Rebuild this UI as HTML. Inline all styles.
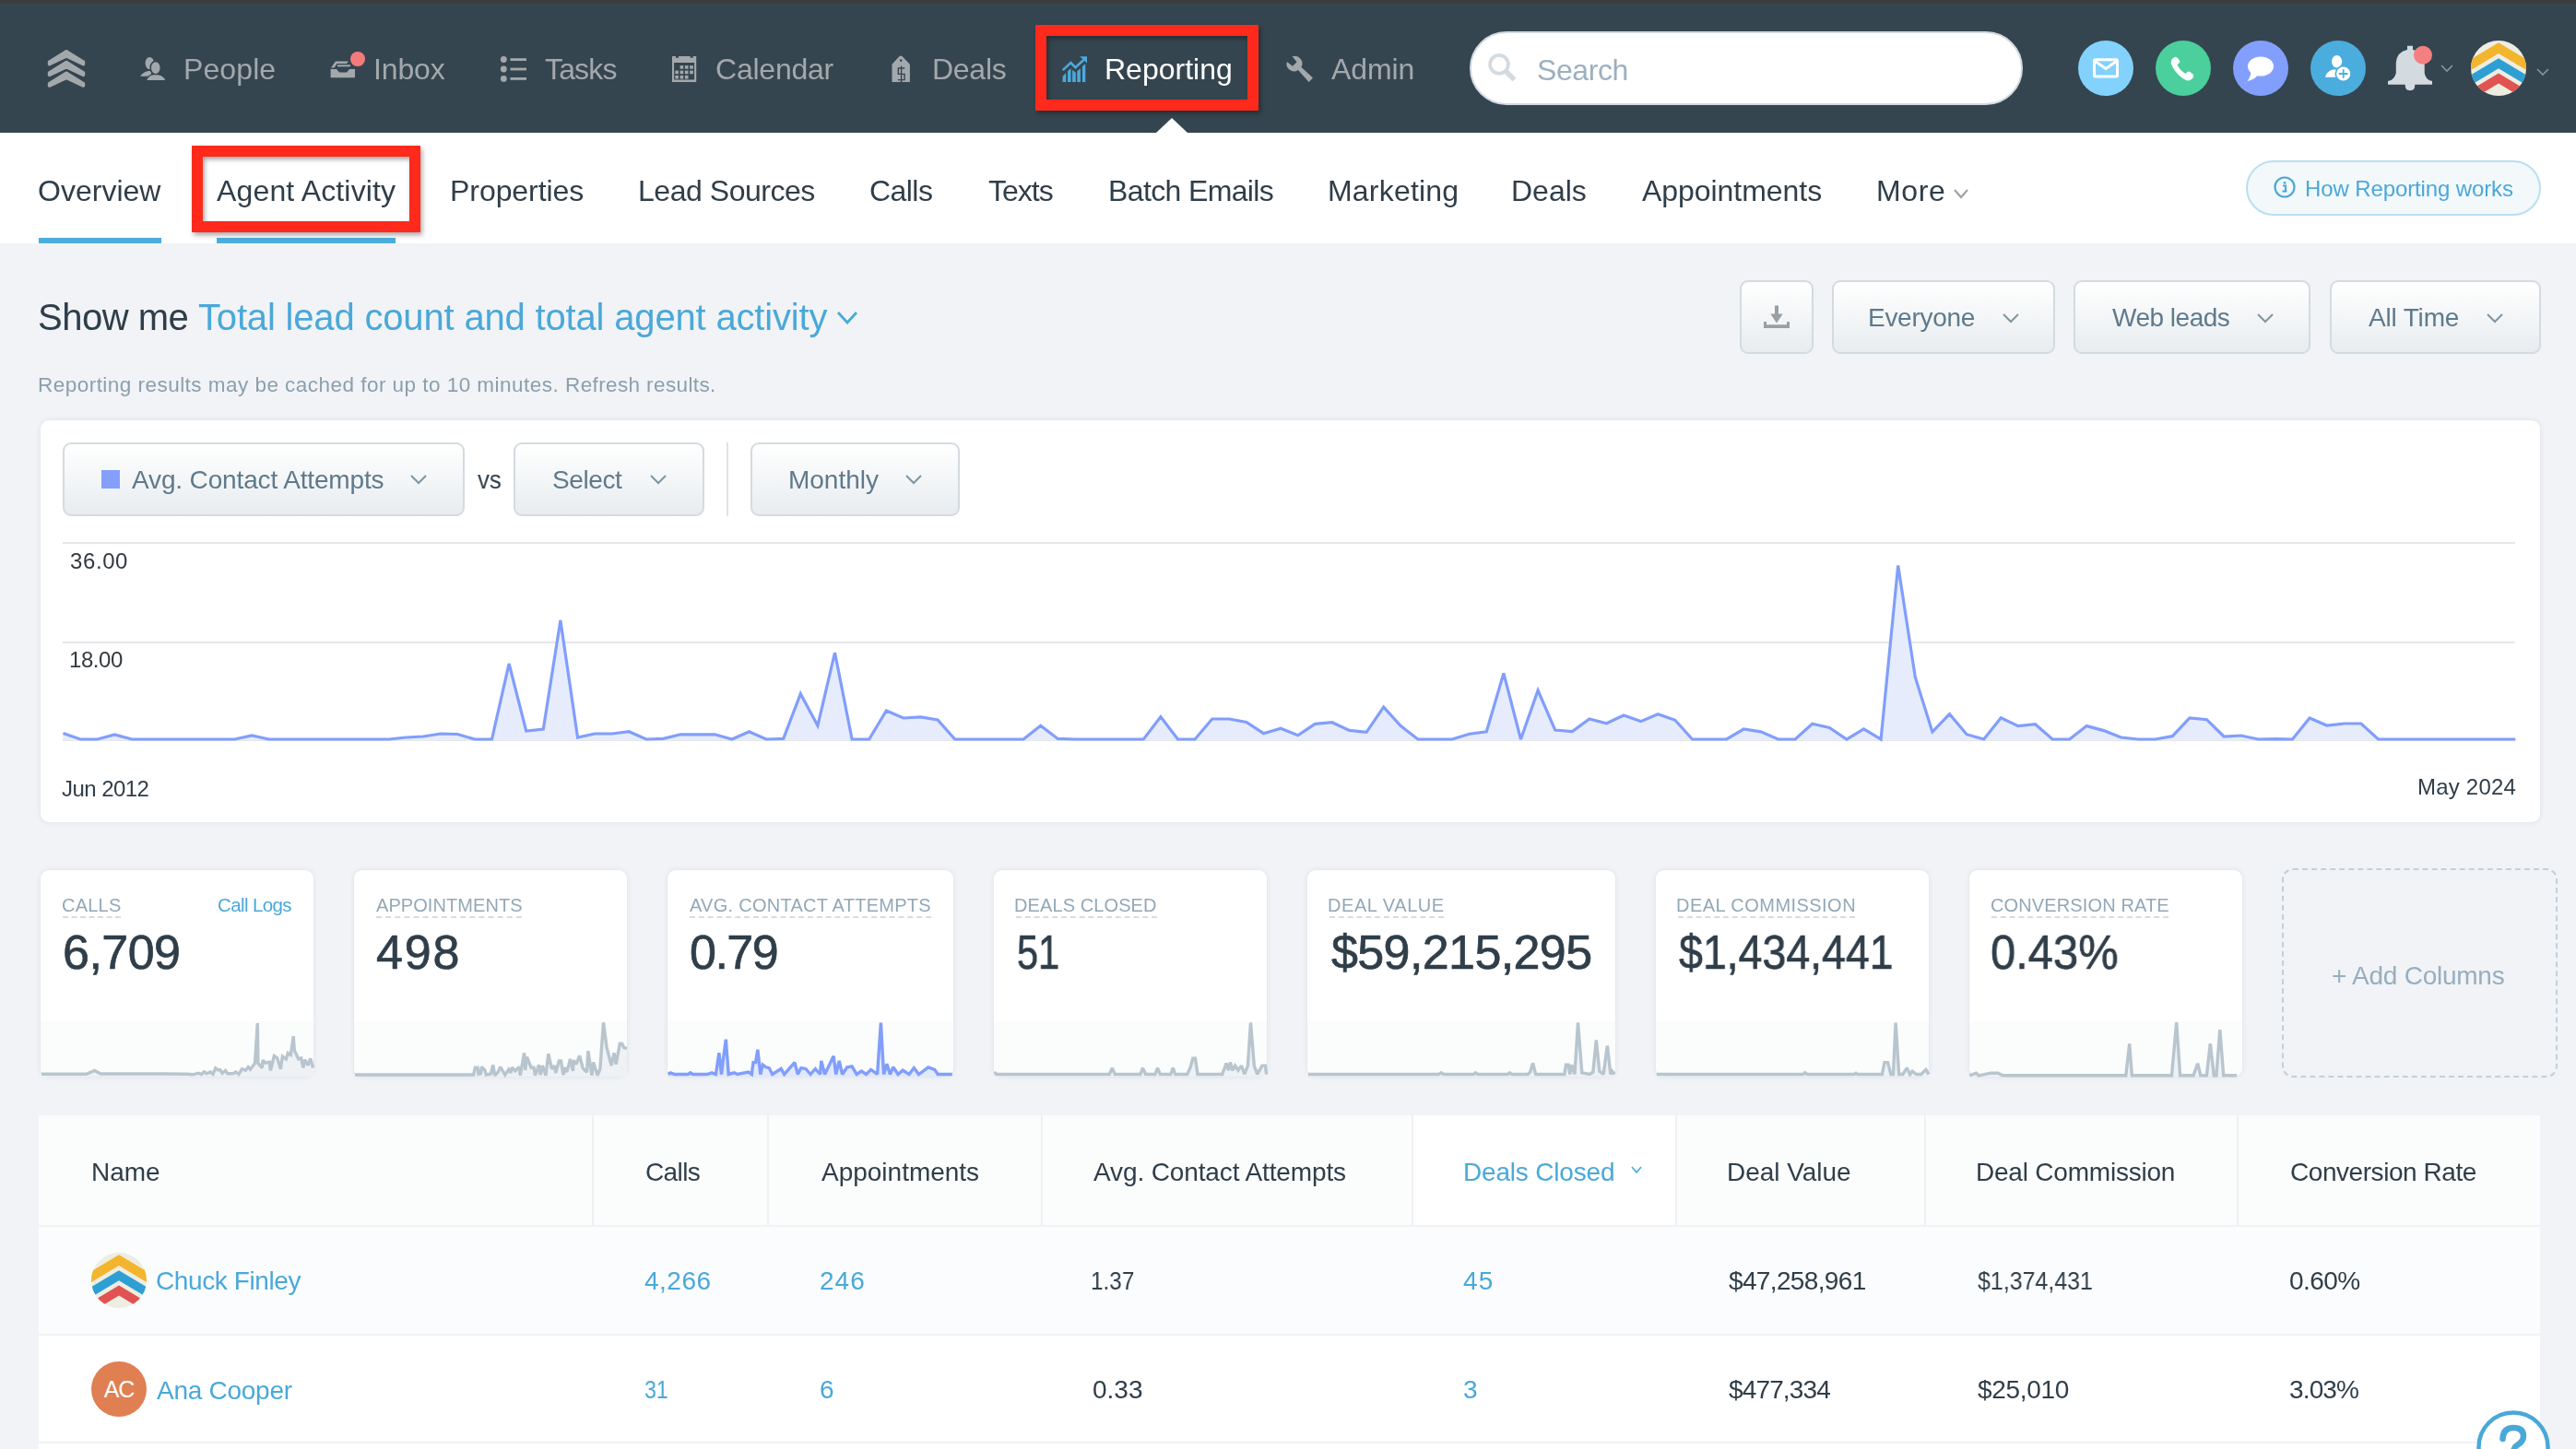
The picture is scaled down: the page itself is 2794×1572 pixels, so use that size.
<!DOCTYPE html><html><head><meta charset="utf-8"><title>Reporting - Agent Activity</title><style>
*{box-sizing:border-box}
html,body{margin:0;padding:0}
body{width:2794px;height:1572px;overflow:hidden;position:relative;background:#f1f3f6;font-family:"Liberation Sans",sans-serif}
.t{position:absolute;white-space:pre;will-change:transform}
.a{position:absolute}
.btn{position:absolute;border:2px solid #d3dbe0;border-radius:9px;background:linear-gradient(#ffffff,#e8ecef)}
.card{position:absolute;background:#fff;border-radius:9px;box-shadow:0 0 0 1px #e6e9ee,0 0 6px rgba(60,80,110,0.09);overflow:hidden}
.spk{position:absolute;left:0;right:0;bottom:0;height:60px;background:#fbfcfc}
.dash{position:absolute;height:0;border-top:2px dashed #d9dcdc}
.redbox{position:absolute;border:12px solid #ff2a1b;box-shadow:2px 3px 5px rgba(0,0,0,0.35),inset 2px 3px 5px rgba(0,0,0,0.35)}
</style></head><body>
<div class="a" style="left:0;top:0;width:2794px;height:4px;background:#3c3c3c"></div>
<div class="a" style="left:0;top:4px;width:2794px;height:140px;background:#35454f"></div>
<div class="a" style="left:0;top:144px;width:2794px;height:120px;background:#fff"></div>
<svg class="a" style="left:48px;top:50px" width="48" height="48"><g fill="#a3a8ac" stroke="#a3a8ac" stroke-width="3.4" stroke-linejoin="round"><polygon points="24,5.8 42.5,17.3 42.5,19.7 24,11 5.5,19.7 5.5,17.3"/><polygon points="24,17.5 42.5,29.0 42.5,31.4 24,22.7 5.5,31.4 5.5,29.0"/><polygon points="24,29.2 42.5,40.7 42.5,43.099999999999994 24,34.4 5.5,43.099999999999994 5.5,40.7"/></g></svg>
<svg class="a" style="left:145px;top:50px" width="40" height="40" viewBox="0 0 40 40"><g fill="#a3a8ac"><ellipse cx="17.3" cy="18.6" rx="4.7" ry="6.7"/><path d="M7 32.8 Q10 28 16 26.9 L19 27 L19 32.8 Z"/><ellipse cx="23.8" cy="23.6" rx="5.6" ry="7.2" stroke="#35454f" stroke-width="1.6"/><path d="M13.5 37.6 Q15 32 21 30.7 L26.5 30.7 Q33.5 32 35 37.6 Z" stroke="#35454f" stroke-width="1.2"/></g></svg>
<svg class="a" style="left:356px;top:54px" width="44" height="34" viewBox="0 0 44 34"><g fill="#a3a8ac"><path d="M2.6 21 L9 21 L12 24.5 L20 24.5 L23 21 L29 21 L29 29.5 Q29 30.3 28.2 30.3 L3.4 30.3 Q2.6 30.3 2.6 29.5 Z"/><path d="M3 19.5 L8 12.5 L22 12.5 L20 15 L9.5 15 L6.5 19.5 Z"/><rect x="10" y="16.3" width="14" height="2"/></g><circle cx="32" cy="10" r="8" fill="#f47b7b"/></svg>
<svg class="a" style="left:540px;top:58px" width="34" height="34" viewBox="0 0 34 34"><g fill="#a3a8ac"><circle cx="6.3" cy="6.5" r="3.4"/><circle cx="6.3" cy="17" r="3.4"/><circle cx="6.3" cy="27.4" r="3.4"/><rect x="13.5" y="5.2" width="17.5" height="2.8"/><rect x="13.5" y="15.6" width="17.5" height="2.8"/><rect x="13.5" y="26" width="17.5" height="2.8"/></g></svg>
<svg class="a" style="left:728px;top:60px" width="30" height="30" viewBox="0 0 30 30"><g fill="#a3a8ac"><path d="M1 1 L5 1 L5 2.7 L8 2.7 L8 1 L20.7 1 L20.7 2.7 L23.7 2.7 L23.7 1 L27.2 1 L27.2 29 L1 29 Z M3.1 8.1 L3.1 26.6 L25.1 26.6 L25.1 8.1 Z"/><rect x="9.6" y="11.1" width="3.6" height="3.6"/><rect x="14.899999999999999" y="11.1" width="3.6" height="3.6"/><rect x="20.2" y="11.1" width="3.6" height="3.6"/><rect x="4.3" y="16.599999999999998" width="3.6" height="3.6"/><rect x="9.6" y="16.599999999999998" width="3.6" height="3.6"/><rect x="14.899999999999999" y="16.599999999999998" width="3.6" height="3.6"/><rect x="20.2" y="16.599999999999998" width="3.6" height="3.6"/><rect x="4.3" y="21.9" width="3.6" height="3.6"/><rect x="9.6" y="21.9" width="3.6" height="3.6"/><rect x="14.899999999999999" y="21.9" width="3.6" height="3.6"/></g></svg>
<svg class="a" style="left:964px;top:58px" width="26" height="34" viewBox="0 0 26 34"><path fill="#a3a8ac" fill-rule="evenodd" d="M3.5 11.7 L11.6 3 Q13 1.8 14.4 3 L22.9 11.7 L22.9 30.9 L3.5 30.9 Z M13.1 6.2 A1.3 1.3 0 1 0 13.11 6.2 Z"/><path d="M17.3 16 L10.3 16 L10.3 22.4 L17.1 22.4 L17.1 28.6 L9.9 28.6 M13.6 13.4 L13.6 31" fill="none" stroke="#35454f" stroke-width="1.4"/></svg>
<svg class="a" style="left:1145px;top:54px" width="40" height="40" viewBox="0 0 40 40"><g fill="#4ba9dc"><path d="M7.6 28.7 L11.2 24.9 L11.2 34.9 L7.6 34.9 Z"/><path d="M13 23.2 L16.6 19.9 L16.6 34.9 L13 34.9 Z"/><path d="M18.1 21.8 L21.8 24.9 L21.8 34.9 L18.1 34.9 Z"/><path d="M23.3 23.2 L26.9 20.2 L26.9 34.9 L23.3 34.9 Z"/><path d="M28.9 18 L32.3 15.2 L32.3 34.9 L28.9 34.9 Z"/><polyline points="7.7,22.1 16.4,14.1 21.4,19.1 30.4,11" fill="none" stroke="#4ba9dc" stroke-width="2.6"/><path d="M26.2 7.2 L34 7.2 L34 14.6 Z"/></g></svg>
<svg class="a" style="left:1390px;top:54px" width="40" height="40" viewBox="0 0 40 40"><path fill="#a3a8ac" d="M11.6,7.3 L16.6,13.3 L11.9,17.7 L5.9,13.1 A8,8 0 0 0 18,22.1 L29.6,34.9 L34,30.4 L21.3,18.8 A8,8 0 0 0 11.6,7.3 Z"/></svg>
<div class="redbox" style="left:1123px;top:27px;width:242px;height:93px"></div>
<svg class="a" style="left:1254px;top:127px" width="34" height="18"><polygon points="0,17 17,1 34,17" fill="#fff"/></svg>
<div class="a" style="left:1594px;top:34px;width:600px;height:80px;border-radius:40px;background:#fff;border:2px solid #d2dae0"></div>
<svg class="a" style="left:1610px;top:54px" width="40" height="40"><circle cx="16" cy="15.8" r="9.9" fill="none" stroke="#d3dbe0" stroke-width="3.8"/><line x1="22.5" y1="22.5" x2="32.5" y2="32.5" stroke="#d3dbe0" stroke-width="5.5"/></svg>
<div class="a" style="left:2254px;top:44px;width:60px;height:60px;border-radius:50%;background:#82d2fd"></div>
<svg class="a" style="left:2254px;top:44px" width="60" height="60"><rect x="17.5" y="20.8" width="25" height="18.2" rx="1.2" fill="none" stroke="#fff" stroke-width="3"/><polyline points="18.5,22.5 30,30.5 41.5,22.5" fill="none" stroke="#fff" stroke-width="3"/></svg>
<div class="a" style="left:2338px;top:44px;width:60px;height:60px;border-radius:50%;background:#4bcf9c"></div>
<svg class="a" style="left:2338px;top:44px" width="60" height="60"><path fill="#fff" d="M18.5 19.5 Q21 16.5 23.5 18.5 L26 21.5 Q27 23.5 25 25 L23.5 26 Q26 32 32.5 36 L34 34.5 Q35.5 33 37.5 34 L40.5 36.5 Q42.5 39 39.5 41.5 L37.5 43 Q34 44.5 28 40 Q20 33.5 17 25.5 Q16 21.5 18.5 19.5 Z"/></svg>
<div class="a" style="left:2422px;top:44px;width:60px;height:60px;border-radius:50%;background:#839ffd"></div>
<svg class="a" style="left:2422px;top:44px" width="60" height="60"><ellipse cx="30" cy="28" rx="14" ry="10.5" fill="#fff"/><path d="M19 33 Q20 38 15.5 44 Q23 42.5 27 37.5 Z" fill="#fff"/></svg>
<div class="a" style="left:2506px;top:44px;width:60px;height:60px;border-radius:50%;background:#4baddd"></div>
<svg class="a" style="left:2506px;top:44px" width="60" height="60"><ellipse cx="28.6" cy="22.8" rx="5.6" ry="6.8" fill="#fff"/><path d="M16 39.8 Q17.5 33.5 24 31.5 L31 31.5 L31 39.8 Z" fill="#fff"/><circle cx="35.7" cy="36" r="8.4" fill="#fff" stroke="#4baddd" stroke-width="1.6"/><path d="M35.7 31.2 L35.7 40.8 M30.9 36 L40.5 36" stroke="#4baddd" stroke-width="1.8"/></svg>
<svg class="a" style="left:2586px;top:46px" width="56" height="56"><path fill="#d4dbe0" d="M25 3.8 L31 3.8 L31 8 Q43 10.5 43.7 22 L43.7 33 Q44.5 40.5 52 42 L52 45.7 L4 45.7 L4 42 Q11.5 40.5 12.8 33 L12.8 22 Q13.5 10.5 25 8 Z"/><path fill="#d4dbe0" d="M22.8 45 L33.2 45 L33.2 47 Q33.2 52.2 28 52.2 Q22.8 52.2 22.8 47 Z"/><circle cx="42" cy="13.8" r="10" fill="#f47f80"/></svg>
<svg class="a" style="left:2646px;top:69px" width="16" height="10"><polyline points="2,2 8.0,8 14,2" fill="none" stroke="#8495a1" stroke-width="1.6"/></svg>
<svg class="a" style="left:2680px;top:44px" width="60" height="60" viewBox="0 0 60 60"><defs><clipPath id="c2680"><circle cx="30" cy="30" r="30"/></clipPath></defs><g clip-path="url(#c2680)"><rect width="60" height="60" fill="#eeede2"/><polygon points="0,20.3 30,2.3 60,20.3 60,31.9 30,13.9 0,31.9" fill="#f2b52d"/><polygon points="0,37.2 30,19.2 60,37.2 60,48.3 30,30.3 0,48.3" fill="#2d9fd3"/><polygon points="0,53.5 30,35.5 60,53.5 60,64.6 30,46.6 0,64.6" fill="#e15252"/></g></svg>
<svg class="a" style="left:2750px;top:73px" width="16" height="10"><polyline points="2,2 8.0,8 14,2" fill="none" stroke="#8495a1" stroke-width="1.6"/></svg>
<div class="a" style="left:42px;top:258px;width:133px;height:6px;background:#4dacdc"></div>
<div class="a" style="left:235px;top:258px;width:194px;height:6px;background:#4dacdc"></div>
<div class="redbox" style="left:208px;top:158px;width:248px;height:94px"></div>
<svg class="a" style="left:2118px;top:204px" width="18" height="12"><polyline points="2,2 9.0,10 16,2" fill="none" stroke="#9ea4a8" stroke-width="2.2"/></svg>
<div class="a" style="left:2436px;top:174px;width:320px;height:60px;border-radius:30px;background:#f3f8fb;border:2px solid #b9def2"></div>
<svg class="a" style="left:2464px;top:189px" width="28" height="28"><circle cx="14" cy="14" r="10.5" fill="none" stroke="#4aa8d9" stroke-width="2.2"/><circle cx="14" cy="9.3" r="1.4" fill="#4aa8d9"/><path d="M12 12.5 L15 12.5 L15 18.5 L16.5 18.5 M11.5 18.5 L15 18.5" fill="none" stroke="#4aa8d9" stroke-width="2"/></svg>
<svg class="a" style="left:907px;top:337px" width="24" height="15"><polyline points="2,2 12.0,13 22,2" fill="none" stroke="#4aa8d9" stroke-width="2.8"/></svg>
<div class="btn" style="left:1887px;top:304px;width:80px;height:80px"></div>
<svg class="a" style="left:1910px;top:328px" width="34" height="32"><path fill="#999fa3" d="M15 3.6 L19 3.6 L19 12.5 L23.7 12.5 L17 22.5 L10.3 12.5 L15 12.5 Z M3 21 L6 21 L6 24.3 L28 24.3 L28 21 L31 21 L31 28 L3 28 Z"/></svg>
<div class="btn" style="left:1987px;top:304px;width:242px;height:80px"></div>
<svg class="a" style="left:2171px;top:339px" width="20" height="12"><polyline points="2,2 10.0,10 18,2" fill="none" stroke="#7f95a4" stroke-width="2"/></svg>
<div class="btn" style="left:2249px;top:304px;width:257px;height:80px"></div>
<svg class="a" style="left:2447px;top:339px" width="20" height="12"><polyline points="2,2 10.0,10 18,2" fill="none" stroke="#7f95a4" stroke-width="2"/></svg>
<div class="btn" style="left:2527px;top:304px;width:229px;height:80px"></div>
<svg class="a" style="left:2696px;top:339px" width="20" height="12"><polyline points="2,2 10.0,10 18,2" fill="none" stroke="#7f95a4" stroke-width="2"/></svg>
<div class="card" style="left:44px;top:456px;width:2711px;height:436px"></div>
<div class="btn" style="left:68px;top:480px;width:436px;height:80px"></div>
<div class="a" style="left:110px;top:510px;width:20px;height:20px;background:#859ffd"></div>
<svg class="a" style="left:444px;top:514px" width="20" height="12"><polyline points="2,2 10.0,10 18,2" fill="none" stroke="#7f95a4" stroke-width="2"/></svg>
<div class="btn" style="left:557px;top:480px;width:207px;height:80px"></div>
<svg class="a" style="left:704px;top:514px" width="20" height="12"><polyline points="2,2 10.0,10 18,2" fill="none" stroke="#7f95a4" stroke-width="2"/></svg>
<div class="a" style="left:788px;top:480px;width:2px;height:80px;background:#dfe3e6"></div>
<div class="btn" style="left:814px;top:480px;width:227px;height:80px"></div>
<svg class="a" style="left:981px;top:514px" width="20" height="12"><polyline points="2,2 10.0,10 18,2" fill="none" stroke="#7f95a4" stroke-width="2"/></svg>
<svg class="a" style="left:0;top:0" width="2794" height="900"><rect x="68" y="588" width="2660" height="2" fill="#e6e7e8"/><rect x="68" y="696" width="2660" height="2" fill="#e6e7e8"/><rect x="68" y="802" width="2660" height="2" fill="#e6e7e8"/><polygon points="68.5,803 68.5,795.5 87.1,802 105.7,802 124.3,797 142.9,802 161.5,802 180.1,802 198.7,802 217.3,802 235.9,802 254.5,802 273.1,798 291.7,802 310.3,802 328.9,802 347.5,802 366.1,802 384.7,802 403.3,802 421.9,802 440.5,800 459.1,799 477.7,796 496.3,796.5 514.9,802 533.5,802 552.1,720 570.7,793 589.3,791 607.9,673 626.5,800 645.1,796 663.7,796 682.3,793.7 700.9,802 719.5,801.4 738.1,796.8 756.7,796.8 775.3,796.8 793.9,802 812.5,793.7 831.1,802 849.7,801.4 868.3,752.7 886.9,787.3 905.5,708 924.1,802 942.7,802 961.3,771 979.9,779 998.5,777.8 1017.1,781 1035.7,802 1054.3,802 1072.9,802 1091.5,802 1110.1,802 1128.7,787.3 1147.3,801.4 1165.9,802 1184.5,802 1203.1,802 1221.7,802 1240.3,802 1258.9,777.6 1277.5,802 1296.1,802 1314.7,780 1333.3,780 1351.9,783.5 1370.5,795.7 1389.1,790.2 1407.7,797.8 1426.3,785.3 1444.9,783.7 1463.5,792.4 1482.1,794.3 1500.7,767.1 1519.3,787.5 1537.9,802 1556.5,802 1575.1,802 1593.7,796.2 1612.3,793.8 1630.9,730.4 1649.5,802 1668.1,749 1686.7,792 1705.3,793.5 1723.9,780 1742.5,784.8 1761.1,776 1779.7,782.6 1798.3,774.7 1816.9,781.3 1835.5,802 1854.1,802 1872.7,802 1891.3,791 1909.9,793.8 1928.5,802 1947.1,802 1965.7,785.3 1984.3,789.4 2002.9,802 2021.5,790.8 2040.1,802 2058.7,613.4 2077.3,734.7 2095.9,794 2114.5,774.7 2133.1,796.7 2151.7,802 2170.3,778.8 2188.9,787.6 2207.5,785.7 2226.1,802 2244.7,802 2263.3,787.6 2281.9,792.6 2300.5,800 2319.1,802 2337.7,802 2356.3,798.7 2374.9,779 2393.5,780.7 2412.1,799 2430.7,798 2449.3,802 2467.9,801.7 2486.5,802 2505.1,779 2523.7,787 2542.3,785 2560.9,785 2579.5,802 2598.1,802 2616.7,802 2635.3,802 2653.9,802 2672.5,802 2691.1,802 2709.7,802 2728.3,802 2728.3,803" fill="#e7ecfd"/><polyline points="68.5,795.5 87.1,802 105.7,802 124.3,797 142.9,802 161.5,802 180.1,802 198.7,802 217.3,802 235.9,802 254.5,802 273.1,798 291.7,802 310.3,802 328.9,802 347.5,802 366.1,802 384.7,802 403.3,802 421.9,802 440.5,800 459.1,799 477.7,796 496.3,796.5 514.9,802 533.5,802 552.1,720 570.7,793 589.3,791 607.9,673 626.5,800 645.1,796 663.7,796 682.3,793.7 700.9,802 719.5,801.4 738.1,796.8 756.7,796.8 775.3,796.8 793.9,802 812.5,793.7 831.1,802 849.7,801.4 868.3,752.7 886.9,787.3 905.5,708 924.1,802 942.7,802 961.3,771 979.9,779 998.5,777.8 1017.1,781 1035.7,802 1054.3,802 1072.9,802 1091.5,802 1110.1,802 1128.7,787.3 1147.3,801.4 1165.9,802 1184.5,802 1203.1,802 1221.7,802 1240.3,802 1258.9,777.6 1277.5,802 1296.1,802 1314.7,780 1333.3,780 1351.9,783.5 1370.5,795.7 1389.1,790.2 1407.7,797.8 1426.3,785.3 1444.9,783.7 1463.5,792.4 1482.1,794.3 1500.7,767.1 1519.3,787.5 1537.9,802 1556.5,802 1575.1,802 1593.7,796.2 1612.3,793.8 1630.9,730.4 1649.5,802 1668.1,749 1686.7,792 1705.3,793.5 1723.9,780 1742.5,784.8 1761.1,776 1779.7,782.6 1798.3,774.7 1816.9,781.3 1835.5,802 1854.1,802 1872.7,802 1891.3,791 1909.9,793.8 1928.5,802 1947.1,802 1965.7,785.3 1984.3,789.4 2002.9,802 2021.5,790.8 2040.1,802 2058.7,613.4 2077.3,734.7 2095.9,794 2114.5,774.7 2133.1,796.7 2151.7,802 2170.3,778.8 2188.9,787.6 2207.5,785.7 2226.1,802 2244.7,802 2263.3,787.6 2281.9,792.6 2300.5,800 2319.1,802 2337.7,802 2356.3,798.7 2374.9,779 2393.5,780.7 2412.1,799 2430.7,798 2449.3,802 2467.9,801.7 2486.5,802 2505.1,779 2523.7,787 2542.3,785 2560.9,785 2579.5,802 2598.1,802 2616.7,802 2635.3,802 2653.9,802 2672.5,802 2691.1,802 2709.7,802 2728.3,802" fill="none" stroke="#819efc" stroke-width="3.2" stroke-linejoin="miter" stroke-miterlimit="3"/></svg>
<div class="card" style="left:44px;top:944px;width:296px;height:224px"><div class="spk"></div></div>
<div class="card" style="left:384px;top:944px;width:296px;height:224px"><div class="spk"></div></div>
<div class="card" style="left:724px;top:944px;width:310px;height:224px"><div class="spk"></div></div>
<div class="card" style="left:1078px;top:944px;width:296px;height:224px"><div class="spk"></div></div>
<div class="card" style="left:1418px;top:944px;width:334px;height:224px"><div class="spk"></div></div>
<div class="card" style="left:1796px;top:944px;width:296px;height:224px"><div class="spk"></div></div>
<div class="card" style="left:2136px;top:944px;width:296px;height:224px"><div class="spk"></div></div>
<svg class="a" style="left:0;top:1100px" width="2794" height="70">
<polygon points="45,68 45,65.29999999999995 93.8,65.29999999999995 102.5,61.5 109.4,65 140,65 180,65 200,65.29999999999995 203.4,65.29999999999995 209,65.79999999999995 215.2,64.20000000000005 218.6,65.59999999999991 221.4,62.700000000000045 224.2,64.70000000000005 228.1,63 231,65.29999999999995 233.8,58.799999999999955 236.6,60.799999999999955 238.8,60.799999999999955 241.1,64.40000000000009 244.5,61.299999999999955 246.7,64.70000000000005 252.9,64.70000000000005 255.7,63 259.1,65.29999999999995 262.5,59.700000000000045 266.4,61.299999999999955 269.2,57.700000000000045 271.5,60.200000000000045 276.5,53.5 279.3,10.099999999999909 279.9,53.5 284.4,58.5 285,50.09999999999991 287.8,53.200000000000045 292.3,52.299999999999955 293.4,61.299999999999955 297.4,45.59999999999991 300.7,47.799999999999955 304.4,59.700000000000045 306.4,46.09999999999991 310.3,49 312.3,42.5 315.4,44.5 318.2,24.200000000000045 319.3,39.40000000000009 323.8,49 326.6,47.799999999999955 328.9,58.5 330.6,49.5 334,55.700000000000045 336.7,48.40000000000009 339.5,58.5 339.5,68" fill="#eff2f4"/><polyline points="45,65.29999999999995 93.8,65.29999999999995 102.5,61.5 109.4,65 140,65 180,65 200,65.29999999999995 203.4,65.29999999999995 209,65.79999999999995 215.2,64.20000000000005 218.6,65.59999999999991 221.4,62.700000000000045 224.2,64.70000000000005 228.1,63 231,65.29999999999995 233.8,58.799999999999955 236.6,60.799999999999955 238.8,60.799999999999955 241.1,64.40000000000009 244.5,61.299999999999955 246.7,64.70000000000005 252.9,64.70000000000005 255.7,63 259.1,65.29999999999995 262.5,59.700000000000045 266.4,61.299999999999955 269.2,57.700000000000045 271.5,60.200000000000045 276.5,53.5 279.3,10.099999999999909 279.9,53.5 284.4,58.5 285,50.09999999999991 287.8,53.200000000000045 292.3,52.299999999999955 293.4,61.299999999999955 297.4,45.59999999999991 300.7,47.799999999999955 304.4,59.700000000000045 306.4,46.09999999999991 310.3,49 312.3,42.5 315.4,44.5 318.2,24.200000000000045 319.3,39.40000000000009 323.8,49 326.6,47.799999999999955 328.9,58.5 330.6,49.5 334,55.700000000000045 336.7,48.40000000000009 339.5,58.5" fill="none" stroke="#b8c5ce" stroke-width="3.4" stroke-linejoin="miter" stroke-miterlimit="2"/>
<polygon points="385,68 385,66 513.6,66 515.4,58.200000000000045 518,58.200000000000045 519,65.40000000000009 521.5,64.70000000000005 522.3,57.5 525.9,61 527.3,66.09999999999991 532.3,65 534.8,55.299999999999955 536.6,66.79999999999995 540.2,63.200000000000045 542.7,57.5 547.8,66.09999999999991 551.7,60.299999999999955 553.9,64 555.3,58.200000000000045 558.9,61.799999999999955 563.2,57.5 564.3,66.79999999999995 568.6,42.40000000000009 569.7,61 571.5,46.700000000000045 576.1,58.200000000000045 579,58.200000000000045 580.5,66.79999999999995 584.4,55.299999999999955 586.2,66.09999999999991 588.4,56 592,66.79999999999995 594.8,43.09999999999991 598.4,59.59999999999991 601.3,56 602.7,64 606.3,51 608.5,51 611,66.09999999999991 612.8,58.200000000000045 614.9,63.200000000000045 618.5,48.90000000000009 621.4,61.799999999999955 622.1,50.299999999999955 625,54.59999999999991 628.6,45.299999999999955 632.2,58.90000000000009 636.5,63.200000000000045 637.9,40.200000000000045 641.9,66.79999999999995 643.7,52.40000000000009 648,66.79999999999995 650.9,59.59999999999991 654.5,9.299999999999955 658,35.90000000000009 663.1,56 666,42.40000000000009 668.1,54.59999999999991 672.4,32.299999999999955 674.6,32.299999999999955 676.7,36.59999999999991 680,37.40000000000009 680,68" fill="#eff2f4"/><polyline points="385,66 513.6,66 515.4,58.200000000000045 518,58.200000000000045 519,65.40000000000009 521.5,64.70000000000005 522.3,57.5 525.9,61 527.3,66.09999999999991 532.3,65 534.8,55.299999999999955 536.6,66.79999999999995 540.2,63.200000000000045 542.7,57.5 547.8,66.09999999999991 551.7,60.299999999999955 553.9,64 555.3,58.200000000000045 558.9,61.799999999999955 563.2,57.5 564.3,66.79999999999995 568.6,42.40000000000009 569.7,61 571.5,46.700000000000045 576.1,58.200000000000045 579,58.200000000000045 580.5,66.79999999999995 584.4,55.299999999999955 586.2,66.09999999999991 588.4,56 592,66.79999999999995 594.8,43.09999999999991 598.4,59.59999999999991 601.3,56 602.7,64 606.3,51 608.5,51 611,66.09999999999991 612.8,58.200000000000045 614.9,63.200000000000045 618.5,48.90000000000009 621.4,61.799999999999955 622.1,50.299999999999955 625,54.59999999999991 628.6,45.299999999999955 632.2,58.90000000000009 636.5,63.200000000000045 637.9,40.200000000000045 641.9,66.79999999999995 643.7,52.40000000000009 648,66.79999999999995 650.9,59.59999999999991 654.5,9.299999999999955 658,35.90000000000009 663.1,56 666,42.40000000000009 668.1,54.59999999999991 672.4,32.299999999999955 674.6,32.299999999999955 676.7,36.59999999999991 680,37.40000000000009" fill="none" stroke="#b8c5ce" stroke-width="3.4" stroke-linejoin="miter" stroke-miterlimit="2"/>
<polygon points="724.7,68 724.7,65.5 727.3,63.799999999999955 731.6,65.5 746.2,65.5 748.8,63.799999999999955 751.4,65.5 766.9,65.5 772.1,63.799999999999955 776.4,65.5 779.9,42.299999999999955 782.5,65.5 784.2,50.90000000000009 787.3,27.59999999999991 790.2,65.5 796.3,63.799999999999955 799.7,65.5 811.8,63.0 815.3,65.5 817.0,52.59999999999991 819.6,52.59999999999991 821.8,38.799999999999955 824.8,65.5 827.3,55.200000000000045 830.8,57.799999999999955 834.2,58.59999999999991 837.7,65.5 847.2,59.5 850.6,65.5 861.9,52.59999999999991 865.3,65.5 868.8,58.59999999999991 873.9,59.5 879.1,65.5 884.3,59.5 889.5,65.5 890.8,50.90000000000009 894.6,65.5 904.1,45.700000000000045 906.7,65.5 910.2,50.90000000000009 913.6,65.5 918.8,57.799999999999955 924.0,56.90000000000009 929.2,65.5 934.3,62.09999999999991 939.5,65.5 944.7,60.40000000000009 951.6,65.5 955.4,9.5 958.5,65.5 961.9,54.299999999999955 965.4,65.5 968.8,57.799999999999955 974.0,65.5 979.2,61.200000000000045 986.1,65.5 991.3,58.59999999999991 996.5,65.5 1006.8,57.799999999999955 1013.7,60.40000000000009 1017.2,65.5 1032.7,65.5 1032.7,68" fill="#e3e9fc"/><polyline points="724.7,65.5 727.3,63.799999999999955 731.6,65.5 746.2,65.5 748.8,63.799999999999955 751.4,65.5 766.9,65.5 772.1,63.799999999999955 776.4,65.5 779.9,42.299999999999955 782.5,65.5 784.2,50.90000000000009 787.3,27.59999999999991 790.2,65.5 796.3,63.799999999999955 799.7,65.5 811.8,63.0 815.3,65.5 817.0,52.59999999999991 819.6,52.59999999999991 821.8,38.799999999999955 824.8,65.5 827.3,55.200000000000045 830.8,57.799999999999955 834.2,58.59999999999991 837.7,65.5 847.2,59.5 850.6,65.5 861.9,52.59999999999991 865.3,65.5 868.8,58.59999999999991 873.9,59.5 879.1,65.5 884.3,59.5 889.5,65.5 890.8,50.90000000000009 894.6,65.5 904.1,45.700000000000045 906.7,65.5 910.2,50.90000000000009 913.6,65.5 918.8,57.799999999999955 924.0,56.90000000000009 929.2,65.5 934.3,62.09999999999991 939.5,65.5 944.7,60.40000000000009 951.6,65.5 955.4,9.5 958.5,65.5 961.9,54.299999999999955 965.4,65.5 968.8,57.799999999999955 974.0,65.5 979.2,61.200000000000045 986.1,65.5 991.3,58.59999999999991 996.5,65.5 1006.8,57.799999999999955 1013.7,60.40000000000009 1017.2,65.5 1032.7,65.5" fill="none" stroke="#819efc" stroke-width="3.4" stroke-linejoin="miter" stroke-miterlimit="2"/>
<polygon points="1078.6,68 1078.6,63.0 1080.7,65.5 1203.2,65.5 1206.3,58.59999999999991 1209.3,65.5 1236.9,65.5 1239.5,58.59999999999991 1242.6,65.5 1252.9,65.5 1255.5,58.59999999999991 1258.4,65.5 1269.7,65.5 1272.3,58.59999999999991 1274.8,65.5 1287.8,65.5 1291.2,57.799999999999955 1293.8,48.299999999999955 1296.4,48.299999999999955 1299.0,65.5 1325.7,65.5 1330.1,53.5 1332.6,61.200000000000045 1334.4,52.59999999999991 1337.0,61.200000000000045 1339.6,56.09999999999991 1343.0,61.200000000000045 1346.5,56.09999999999991 1349.9,65.5 1353.4,56.09999999999991 1356.5,9.5 1360.3,56.09999999999991 1363.7,65.5 1368.9,56.09999999999991 1372.3,56.09999999999991 1373.7,65.5 1373.7,68" fill="#eff2f4"/><polyline points="1078.6,63.0 1080.7,65.5 1203.2,65.5 1206.3,58.59999999999991 1209.3,65.5 1236.9,65.5 1239.5,58.59999999999991 1242.6,65.5 1252.9,65.5 1255.5,58.59999999999991 1258.4,65.5 1269.7,65.5 1272.3,58.59999999999991 1274.8,65.5 1287.8,65.5 1291.2,57.799999999999955 1293.8,48.299999999999955 1296.4,48.299999999999955 1299.0,65.5 1325.7,65.5 1330.1,53.5 1332.6,61.200000000000045 1334.4,52.59999999999991 1337.0,61.200000000000045 1339.6,56.09999999999991 1343.0,61.200000000000045 1346.5,56.09999999999991 1349.9,65.5 1353.4,56.09999999999991 1356.5,9.5 1360.3,56.09999999999991 1363.7,65.5 1368.9,56.09999999999991 1372.3,56.09999999999991 1373.7,65.5" fill="none" stroke="#b8c5ce" stroke-width="3.4" stroke-linejoin="miter" stroke-miterlimit="2"/>
<polygon points="1419.0,68 1419.0,65.5 1560.5,65.5 1563.1,63.799999999999955 1565.7,65.5 1598.4,65.5 1600.2,63.799999999999955 1602.8,65.5 1635.5,65.5 1637.3,63.799999999999955 1639.9,65.5 1657.1,65.5 1659.7,63.0 1662.6,53.5 1665.7,65.5 1696.8,65.5 1698.5,55.200000000000045 1701.1,55.200000000000045 1702.8,65.5 1704.6,55.200000000000045 1708.0,65.5 1711.5,9.5 1715.8,63.799999999999955 1724.4,65.5 1727.9,63.0 1731.3,28.40000000000009 1734.8,62.09999999999991 1739.1,65.5 1743.4,34.5 1746.9,65.5 1748.6,62.09999999999991 1751.2,65.5 1751.2,68" fill="#eff2f4"/><polyline points="1419.0,65.5 1560.5,65.5 1563.1,63.799999999999955 1565.7,65.5 1598.4,65.5 1600.2,63.799999999999955 1602.8,65.5 1635.5,65.5 1637.3,63.799999999999955 1639.9,65.5 1657.1,65.5 1659.7,63.0 1662.6,53.5 1665.7,65.5 1696.8,65.5 1698.5,55.200000000000045 1701.1,55.200000000000045 1702.8,65.5 1704.6,55.200000000000045 1708.0,65.5 1711.5,9.5 1715.8,63.799999999999955 1724.4,65.5 1727.9,63.0 1731.3,28.40000000000009 1734.8,62.09999999999991 1739.1,65.5 1743.4,34.5 1746.9,65.5 1748.6,62.09999999999991 1751.2,65.5" fill="none" stroke="#b8c5ce" stroke-width="3.4" stroke-linejoin="miter" stroke-miterlimit="2"/>
<polygon points="1796.9,68 1796.9,65.5 1956.0,65.5 1957.7,63.799999999999955 1960.3,65.5 2011.2,65.5 2013.0,64.29999999999995 2014.7,65.5 2041.4,65.5 2044.0,52.59999999999991 2047.5,52.59999999999991 2050.9,65.5 2053.5,65.5 2056.1,9.5 2059.6,65.5 2063.9,65.5 2068.2,58.59999999999991 2071.6,65.5 2074.2,62.09999999999991 2078.5,65.5 2083.7,65.5 2088.9,60.40000000000009 2092.0,65.5 2092.0,68" fill="#eff2f4"/><polyline points="1796.9,65.5 1956.0,65.5 1957.7,63.799999999999955 1960.3,65.5 2011.2,65.5 2013.0,64.29999999999995 2014.7,65.5 2041.4,65.5 2044.0,52.59999999999991 2047.5,52.59999999999991 2050.9,65.5 2053.5,65.5 2056.1,9.5 2059.6,65.5 2063.9,65.5 2068.2,58.59999999999991 2071.6,65.5 2074.2,62.09999999999991 2078.5,65.5 2083.7,65.5 2088.9,60.40000000000009 2092.0,65.5" fill="none" stroke="#b8c5ce" stroke-width="3.4" stroke-linejoin="miter" stroke-miterlimit="2"/>
<polygon points="2136.2,68 2136.2,66.79999999999995 2143.5,64.20000000000005 2146.2,66.79999999999995 2159.2,64.20000000000005 2167.1,64.20000000000005 2172.3,66.79999999999995 2305.8,66.79999999999995 2309.7,32.299999999999955 2312.3,66.79999999999995 2355.5,66.79999999999995 2360.7,9.200000000000045 2364.6,66.79999999999995 2379,66.79999999999995 2383.7,53.700000000000045 2386.9,66.79999999999995 2393.4,66.79999999999995 2397.3,32.299999999999955 2401.3,66.79999999999995 2403.9,66.79999999999995 2407.8,17.09999999999991 2411.7,66.79999999999995 2426.1,66.79999999999995 2426.1,68" fill="#eff2f4"/><polyline points="2136.2,66.79999999999995 2143.5,64.20000000000005 2146.2,66.79999999999995 2159.2,64.20000000000005 2167.1,64.20000000000005 2172.3,66.79999999999995 2305.8,66.79999999999995 2309.7,32.299999999999955 2312.3,66.79999999999995 2355.5,66.79999999999995 2360.7,9.200000000000045 2364.6,66.79999999999995 2379,66.79999999999995 2383.7,53.700000000000045 2386.9,66.79999999999995 2393.4,66.79999999999995 2397.3,32.299999999999955 2401.3,66.79999999999995 2403.9,66.79999999999995 2407.8,17.09999999999991 2411.7,66.79999999999995 2426.1,66.79999999999995" fill="none" stroke="#b8c5ce" stroke-width="3.4" stroke-linejoin="miter" stroke-miterlimit="2"/>
</svg>
<div class="dash" style="left:68px;top:994px;width:63px"></div>
<div class="dash" style="left:408px;top:994px;width:158px"></div>
<div class="dash" style="left:748px;top:994px;width:262px"></div>
<div class="dash" style="left:1102px;top:994px;width:153px"></div>
<div class="dash" style="left:1442px;top:994px;width:124px"></div>
<div class="dash" style="left:1820px;top:994px;width:192px"></div>
<div class="dash" style="left:2160px;top:994px;width:192px"></div>
<div class="a" style="left:2475px;top:942px;width:299px;height:227px;border:2px dashed #c3d0d9;border-radius:12px"></div>
<div class="a" style="left:42px;top:1210px;width:2713px;height:400px;background:#fff"></div>
<div class="a" style="left:42px;top:1210px;width:2713px;height:120px;background:#fbfcfc"></div>
<div class="a" style="left:1531px;top:1210px;width:287px;height:120px;background:#fff"></div>
<div class="a" style="left:642px;top:1210px;width:2px;height:120px;background:#eef0f2"></div>
<div class="a" style="left:832px;top:1210px;width:2px;height:120px;background:#eef0f2"></div>
<div class="a" style="left:1129px;top:1210px;width:2px;height:120px;background:#eef0f2"></div>
<div class="a" style="left:1531px;top:1210px;width:2px;height:120px;background:#eef0f2"></div>
<div class="a" style="left:1817px;top:1210px;width:2px;height:120px;background:#eef0f2"></div>
<div class="a" style="left:2087px;top:1210px;width:2px;height:120px;background:#eef0f2"></div>
<div class="a" style="left:2426px;top:1210px;width:2px;height:120px;background:#eef0f2"></div>
<div class="a" style="left:42px;top:1329px;width:2713px;height:2px;background:#f0f2f4"></div>
<div class="a" style="left:42px;top:1331px;width:2713px;height:116px;background:#fbfcfd"></div>
<div class="a" style="left:42px;top:1447px;width:2713px;height:2px;background:#f0f2f4"></div>
<div class="a" style="left:42px;top:1564px;width:2713px;height:2px;background:#f0f2f4"></div>
<svg class="a" style="left:1768px;top:1264px" width="14" height="10"><polyline points="2,2 7.0,8 12,2" fill="none" stroke="#4aa8d9" stroke-width="1.6"/></svg>
<svg class="a" style="left:99px;top:1359px" width="60" height="60" viewBox="0 0 60 60"><defs><clipPath id="c99"><circle cx="30" cy="30" r="30"/></clipPath></defs><g clip-path="url(#c99)"><rect width="60" height="60" fill="#eeede2"/><polygon points="0,20.3 30,2.3 60,20.3 60,31.9 30,13.9 0,31.9" fill="#f2b52d"/><polygon points="0,37.2 30,19.2 60,37.2 60,48.3 30,30.3 0,48.3" fill="#2d9fd3"/><polygon points="0,53.5 30,35.5 60,53.5 60,64.6 30,46.6 0,64.6" fill="#e15252"/></g></svg>
<div class="a" style="left:99px;top:1477px;width:60px;height:60px;border-radius:50%;background:#e07f52;color:#fff;font-size:25px;line-height:60px;text-align:center;letter-spacing:-1px">AC</div>
<svg class="a" style="left:2680px;top:1524px" width="100" height="60"><circle cx="46" cy="46" r="37.5" fill="#fff" stroke="#4aa8d9" stroke-width="4.5"/><path d="M34.5 37 Q35 25 46 25 Q57 25 57 34 Q57 40 50 44 Q46 46.5 46 52" fill="none" stroke="#4aa8d9" stroke-width="6.5" stroke-linecap="round"/></svg>
<div class="t" id="n_people" style="left:198.5px;top:59.0px;font-size:32px;line-height:32px;letter-spacing:0.1px;color:#a3a8ac;">People</div>
<div class="t" id="n_inbox" style="left:405.0px;top:59.0px;font-size:32px;line-height:32px;letter-spacing:-0.125px;color:#a3a8ac;">Inbox</div>
<div class="t" id="n_tasks" style="left:590.5px;top:59.0px;font-size:32px;line-height:32px;letter-spacing:-0.85px;color:#a3a8ac;">Tasks</div>
<div class="t" id="n_cal" style="left:775.6px;top:59.0px;font-size:32px;line-height:32px;letter-spacing:-0.229px;color:#a3a8ac;">Calendar</div>
<div class="t" id="n_deals" style="left:1010.7px;top:59.0px;font-size:32px;line-height:32px;letter-spacing:-0.275px;color:#a3a8ac;">Deals</div>
<div class="t" id="n_rep" style="left:1197.5px;top:59.0px;font-size:32px;line-height:32px;letter-spacing:0.0px;color:#ffffff;">Reporting</div>
<div class="t" id="n_admin" style="left:1444.0px;top:59.0px;font-size:32px;line-height:32px;letter-spacing:-0.125px;color:#a3a8ac;">Admin</div>
<div class="t" id="n_search" style="left:1666.6px;top:59.5px;font-size:32px;line-height:32px;letter-spacing:-0.4px;color:#9db0bf;">Search</div>
<div class="t" id="s_over" style="left:40.9px;top:191.0px;font-size:32px;line-height:32px;letter-spacing:0.014px;color:#2f3e49;">Overview</div>
<div class="t" id="s_agent" style="left:235.0px;top:191.0px;font-size:32px;line-height:32px;letter-spacing:0.154px;color:#2f3e49;">Agent Activity</div>
<div class="t" id="s_prop" style="left:487.5px;top:191.0px;font-size:32px;line-height:32px;letter-spacing:-0.056px;color:#2f3e49;">Properties</div>
<div class="t" id="s_lead" style="left:691.7px;top:191.0px;font-size:32px;line-height:32px;letter-spacing:-0.464px;color:#2f3e49;">Lead Sources</div>
<div class="t" id="s_calls" style="left:943.0px;top:191.0px;font-size:32px;line-height:32px;letter-spacing:-0.55px;color:#2f3e49;">Calls</div>
<div class="t" id="s_texts" style="left:1072.0px;top:191.0px;font-size:32px;line-height:32px;letter-spacing:-1.0px;color:#2f3e49;">Texts</div>
<div class="t" id="s_batch" style="left:1202.0px;top:191.0px;font-size:32px;line-height:32px;letter-spacing:-0.627px;color:#2f3e49;">Batch Emails</div>
<div class="t" id="s_mkt" style="left:1439.8px;top:191.0px;font-size:32px;line-height:32px;letter-spacing:0.2px;color:#2f3e49;">Marketing</div>
<div class="t" id="s_deals" style="left:1639.0px;top:191.0px;font-size:32px;line-height:32px;letter-spacing:0.0px;color:#2f3e49;">Deals</div>
<div class="t" id="s_appt" style="left:1781.0px;top:191.0px;font-size:32px;line-height:32px;letter-spacing:-0.045px;color:#2f3e49;">Appointments</div>
<div class="t" id="s_more" style="left:2035.0px;top:191.0px;font-size:32px;line-height:32px;letter-spacing:0.667px;color:#2f3e49;">More</div>
<div class="t" id="s_how" style="left:2499.7px;top:193.0px;font-size:24px;line-height:24px;letter-spacing:-0.116px;color:#4aa8d9;">How Reporting works</div>
<div class="t" id="h_show" style="left:40.6px;top:324.0px;font-size:40px;line-height:40px;letter-spacing:-0.483px;color:#2f3e49;">Show me</div>
<div class="t" id="h_total" style="left:215.0px;top:324.0px;font-size:40px;line-height:40px;letter-spacing:-0.171px;color:#4aa8d9;">Total lead count and total agent activity</div>
<div class="t" id="h_cache" style="left:41.2px;top:406.5px;font-size:22.5px;line-height:22.5px;letter-spacing:0.469px;color:#8b9fac;">Reporting results may be cached for up to 10 minutes.</div>
<div class="t" id="h_refresh" style="left:613.4px;top:406.5px;font-size:22.5px;line-height:22.5px;letter-spacing:0.386px;color:#8b9fac;">Refresh results.</div>
<div class="t" id="b_every" style="left:2026.4px;top:331.0px;font-size:28px;line-height:28px;letter-spacing:-0.286px;color:#5f7a8c;">Everyone</div>
<div class="t" id="b_web" style="left:2291.0px;top:331.0px;font-size:28px;line-height:28px;letter-spacing:-0.5px;color:#5f7a8c;">Web leads</div>
<div class="t" id="b_all" style="left:2569.4px;top:331.0px;font-size:28px;line-height:28px;letter-spacing:-0.171px;color:#5f7a8c;">All Time</div>
<div class="t" id="c_avg" style="left:142.6px;top:506.7px;font-size:28px;line-height:28px;letter-spacing:-0.145px;color:#5f7a8c;">Avg. Contact Attempts</div>
<div class="t" id="c_vs" style="left:517.8px;top:507.0px;font-size:28px;line-height:28px;color:#2f3e49;transform:scaleX(0.9197);transform-origin:0 0;">vs</div>
<div class="t" id="c_sel" style="left:599.0px;top:506.7px;font-size:28px;line-height:28px;letter-spacing:-0.4px;color:#5f7a8c;">Select</div>
<div class="t" id="c_mon" style="left:854.5px;top:506.7px;font-size:28px;line-height:28px;letter-spacing:-0.017px;color:#5f7a8c;">Monthly</div>
<div class="t" id="a_36" style="left:75.6px;top:597.2px;font-size:24px;line-height:24px;letter-spacing:0.6px;color:#333a3f;">36.00</div>
<div class="t" id="a_18" style="left:74.6px;top:704.3px;font-size:24px;line-height:24px;letter-spacing:-0.45px;color:#333a3f;">18.00</div>
<div class="t" id="a_jun" style="left:67.4px;top:844.2px;font-size:24px;line-height:24px;letter-spacing:-0.543px;color:#2f3e49;">Jun 2012</div>
<div class="t" id="a_may" style="left:2622.0px;top:842.0px;font-size:24px;line-height:24px;letter-spacing:0.214px;color:#2f3e49;">May 2024</div>
<div class="t" id="k_l1" style="left:67.3px;top:972.0px;font-size:20px;line-height:20px;letter-spacing:0.225px;color:#93a8b7;">CALLS</div>
<div class="t" id="k_log" style="left:235.6px;top:972.0px;font-size:20.5px;line-height:20.5px;letter-spacing:-0.625px;color:#4aa8d9;">Call Logs</div>
<div class="t" id="k_l2" style="left:408.3px;top:972.0px;font-size:20px;line-height:20px;letter-spacing:0.074px;color:#93a8b7;">APPOINTMENTS</div>
<div class="t" id="k_l3" style="left:748.3px;top:972.0px;font-size:20px;line-height:20px;letter-spacing:0.265px;color:#93a8b7;">AVG. CONTACT ATTEMPTS</div>
<div class="t" id="k_l4" style="left:1100.3px;top:972.0px;font-size:20px;line-height:20px;letter-spacing:0.101px;color:#93a8b7;">DEALS CLOSED</div>
<div class="t" id="k_l5" style="left:1440.3px;top:972.0px;font-size:20px;line-height:20px;letter-spacing:0.556px;color:#93a8b7;">DEAL VALUE</div>
<div class="t" id="k_l6" style="left:1818.2px;top:972.0px;font-size:20px;line-height:20px;letter-spacing:0.457px;color:#93a8b7;">DEAL COMMISSION</div>
<div class="t" id="k_l7" style="left:2159.0px;top:972.0px;font-size:20px;line-height:20px;letter-spacing:0.128px;color:#93a8b7;">CONVERSION RATE</div>
<div class="t" id="k_v1" style="left:68.0px;top:1007.0px;font-size:52px;line-height:52px;letter-spacing:-0.525px;color:#2f3e49;-webkit-text-stroke:0.7px #2f3e49">6,709</div>
<div class="t" id="k_v2" style="left:407.8px;top:1007.0px;font-size:52px;line-height:52px;letter-spacing:1.8px;color:#2f3e49;-webkit-text-stroke:0.7px #2f3e49">498</div>
<div class="t" id="k_v3" style="left:748.0px;top:1007.0px;font-size:52px;line-height:52px;letter-spacing:-1.5px;color:#2f3e49;-webkit-text-stroke:0.7px #2f3e49">0.79</div>
<div class="t" id="k_v4" style="left:1103.4px;top:1007.0px;font-size:52px;line-height:52px;color:#2f3e49;transform:scaleX(0.7963);transform-origin:0 0;-webkit-text-stroke:0.7px #2f3e49">51</div>
<div class="t" id="k_v5" style="left:1444.0px;top:1007.0px;font-size:52px;line-height:52px;letter-spacing:-0.61px;color:#2f3e49;-webkit-text-stroke:0.7px #2f3e49">$59,215,295</div>
<div class="t" id="k_v6" style="left:1821.4px;top:1007.0px;font-size:52px;line-height:52px;color:#2f3e49;transform:scaleX(0.8939);transform-origin:0 0;-webkit-text-stroke:0.7px #2f3e49">$1,434,441</div>
<div class="t" id="k_v7" style="left:2159.1px;top:1007.0px;font-size:52px;line-height:52px;color:#2f3e49;transform:scaleX(0.9404);transform-origin:0 0;-webkit-text-stroke:0.7px #2f3e49">0.43%</div>
<div class="t" id="k_add" style="left:2529.0px;top:1045.0px;font-size:28px;line-height:28px;letter-spacing:-0.25px;color:#98aebe;">+ Add Columns</div>
<div class="t" id="t_name" style="left:98.8px;top:1258.0px;font-size:28px;line-height:28px;letter-spacing:0.0px;color:#2f3e49;">Name</div>
<div class="t" id="t_calls" style="left:699.5px;top:1258.0px;font-size:28px;line-height:28px;letter-spacing:-0.625px;color:#2f3e49;">Calls</div>
<div class="t" id="t_appt" style="left:890.6px;top:1258.0px;font-size:28px;line-height:28px;letter-spacing:-0.01px;color:#2f3e49;">Appointments</div>
<div class="t" id="t_avg" style="left:1185.8px;top:1258.0px;font-size:28px;line-height:28px;letter-spacing:-0.12px;color:#2f3e49;">Avg. Contact Attempts</div>
<div class="t" id="t_deals" style="left:1586.7px;top:1258.0px;font-size:28px;line-height:28px;letter-spacing:-0.182px;color:#4aa8d9;">Deals Closed</div>
<div class="t" id="t_dv" style="left:1873.2px;top:1258.0px;font-size:28px;line-height:28px;letter-spacing:-0.045px;color:#2f3e49;">Deal Value</div>
<div class="t" id="t_dc" style="left:2142.6px;top:1258.0px;font-size:28px;line-height:28px;letter-spacing:-0.214px;color:#2f3e49;">Deal Commission</div>
<div class="t" id="t_cr" style="left:2484.0px;top:1258.0px;font-size:28px;line-height:28px;letter-spacing:-0.444px;color:#2f3e49;">Conversion Rate</div>
<div class="t" id="r1_name" style="left:168.8px;top:1376.3px;font-size:28px;line-height:28px;letter-spacing:-0.391px;color:#4aa8d9;">Chuck Finley</div>
<div class="t" id="r1_calls" style="left:698.7px;top:1375.5px;font-size:28px;line-height:28px;letter-spacing:0.5px;color:#4aa8d9;">4,266</div>
<div class="t" id="r1_appt" style="left:888.8px;top:1375.5px;font-size:28px;line-height:28px;letter-spacing:1.0px;color:#4aa8d9;">246</div>
<div class="t" id="r1_avg" style="left:1183.3px;top:1375.5px;font-size:28px;line-height:28px;color:#2f3e49;transform:scaleX(0.8682);transform-origin:0 0;">1.37</div>
<div class="t" id="r1_deals" style="left:1586.9px;top:1375.5px;font-size:28px;line-height:28px;letter-spacing:1.3px;color:#4aa8d9;">45</div>
<div class="t" id="r1_dv" style="left:1874.5px;top:1375.5px;font-size:28px;line-height:28px;letter-spacing:-0.64px;color:#2f3e49;">$47,258,961</div>
<div class="t" id="r1_dc" style="left:2144.6px;top:1375.5px;font-size:28px;line-height:28px;color:#2f3e49;transform:scaleX(0.8910);transform-origin:0 0;">$1,374,431</div>
<div class="t" id="r1_cr" style="left:2482.8px;top:1375.5px;font-size:28px;line-height:28px;letter-spacing:-0.55px;color:#2f3e49;">0.60%</div>
<div class="t" id="r2_name" style="left:169.8px;top:1494.7px;font-size:28px;line-height:28px;letter-spacing:-0.267px;color:#4aa8d9;">Ana Cooper</div>
<div class="t" id="r2_calls" style="left:698.9px;top:1493.8px;font-size:28px;line-height:28px;color:#4aa8d9;transform:scaleX(0.8276);transform-origin:0 0;">31</div>
<div class="t" id="r2_appt" style="left:888.8px;top:1493.8px;font-size:28px;line-height:28px;letter-spacing:0px;color:#4aa8d9;">6</div>
<div class="t" id="r2_avg" style="left:1184.7px;top:1493.8px;font-size:28px;line-height:28px;letter-spacing:0.0px;color:#2f3e49;">0.33</div>
<div class="t" id="r2_deals" style="left:1587.0px;top:1493.8px;font-size:28px;line-height:28px;letter-spacing:0px;color:#4aa8d9;">3</div>
<div class="t" id="r2_dv" style="left:1874.5px;top:1493.8px;font-size:28px;line-height:28px;letter-spacing:-0.857px;color:#2f3e49;">$477,334</div>
<div class="t" id="r2_dc" style="left:2144.6px;top:1493.8px;font-size:28px;line-height:28px;letter-spacing:-0.333px;color:#2f3e49;">$25,010</div>
<div class="t" id="r2_cr" style="left:2482.8px;top:1493.8px;font-size:28px;line-height:28px;letter-spacing:-0.85px;color:#2f3e49;">3.03%</div>
</body></html>
